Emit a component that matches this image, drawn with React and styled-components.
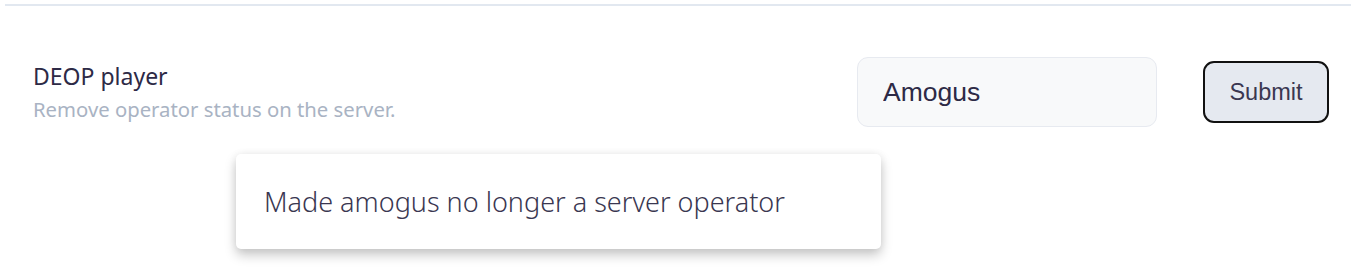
import React, { useState } from 'react';
import styled, { createGlobalStyle } from 'styled-components';

const GlobalStyle = createGlobalStyle`
  * { box-sizing: border-box; }
  body {
    margin: 0;
    background: #ffffff;
    font-family: "Noto Sans", "Open Sans", sans-serif;
  }
`;

const Page = styled.div`
  padding: 4px 5px 0 5px;
  position: relative;
  height: 268px;
`;

const Divider = styled.div`
  height: 2px;
  background: #e2e8f0;
`;

const SettingRow = styled.div`
  display: flex;
  align-items: center;
  justify-content: space-between;
  padding: 51px 22px 0 28px;
`;

const Info = styled.div`
  display: flex;
  flex-direction: column;
`;

const Title = styled.div`
  font-size: 23px;
  color: #2d2a46;
  line-height: 28px;
`;

const Description = styled.div`
  font-size: 20.3px;
  color: #a9b3c3;
  line-height: 26px;
  margin-top: 6px;
`;

const Controls = styled.div`
  display: flex;
  align-items: center;
  gap: 46px;
`;

const TextInput = styled.input`
  width: 300px;
  height: 70px;
  padding: 0 25px;
  border: 1px solid #e7eaf0;
  border-radius: 11px;
  background: #f8f9fa;
  font-family: "Liberation Sans", Arial, sans-serif;
  font-size: 26.5px;
  color: #2d2a46;
  outline: none;
`;

const SubmitButton = styled.button`
  width: 126px;
  height: 62px;
  padding: 0;
  border: 2px solid #111111;
  border-radius: 11px;
  background: #e5e9f0;
  font-family: "Liberation Sans", Arial, sans-serif;
  font-size: 23.5px;
  color: #3a3751;
  cursor: pointer;
`;

const Toast = styled.div`
  position: absolute;
  left: 236px;
  top: 154px;
  width: 645px;
  height: 95px;
  display: flex;
  align-items: center;
  padding: 0 28px;
  background: #ffffff;
  border-radius: 5px;
  box-shadow: 0 6px 12px rgba(0, 0, 0, 0.22), 0 0 8px rgba(0, 0, 0, 0.06);
  font-size: 27px;
  font-weight: 300;
  color: #3a3751;
`;

export default function App() {
  const [player, setPlayer] = useState('Amogus');

  return (
    <>
      <GlobalStyle />
      <Page>
        <Divider />
        <SettingRow>
          <Info>
            <Title>DEOP player</Title>
            <Description>Remove operator status on the server.</Description>
          </Info>
          <Controls>
            <TextInput value={player} onChange={e => setPlayer(e.target.value)} />
            <SubmitButton>Submit</SubmitButton>
          </Controls>
        </SettingRow>
        <Toast>Made amogus no longer a server operator</Toast>
      </Page>
    </>
  );
}
